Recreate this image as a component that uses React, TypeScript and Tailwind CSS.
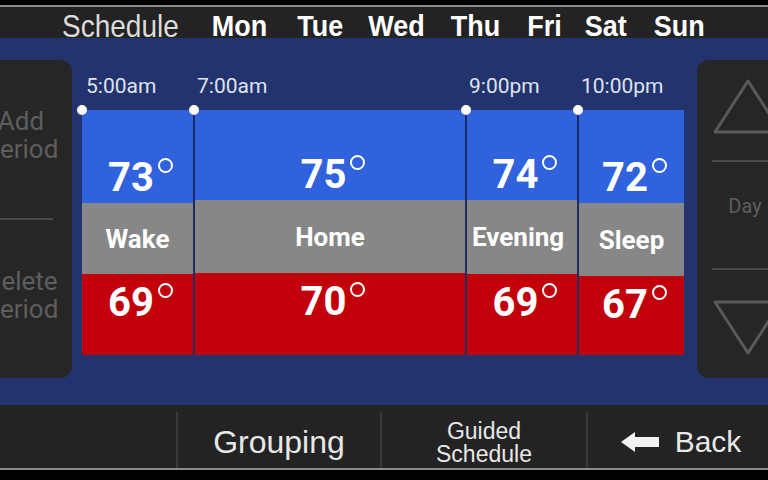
const days = [
  { name: "Mon", cls: "ml-[33px]" },
  { name: "Tue", cls: "ml-[30px]" },
  { name: "Wed", cls: "ml-[25px]" },
  { name: "Thu", cls: "ml-[26px]" },
  { name: "Fri", cls: "ml-[27px]" },
  { name: "Sat", cls: "ml-[23px]" },
  { name: "Sun", cls: "ml-[27px]" },
];

const periods = [
  { time: "5:00am", label: "Wake", cool: 73, heat: 69, w: "w-[111px]", blue: "h-[93px]", gray: "h-[71px]", first: true },
  { time: "7:00am", label: "Home", cool: 75, heat: 70, w: "w-[272px]", blue: "h-[90px]", gray: "h-[73px]", first: false },
  { time: "9:00pm", label: "Evening", cool: 74, heat: 69, w: "w-[112px]", blue: "h-[90px]", gray: "h-[74px]", first: false },
  { time: "10:00pm", label: "Sleep", cool: 72, heat: 67, w: "w-[107px]", blue: "h-[93px]", gray: "h-[73px]", first: false },
];

function Temp({ value }: { value: number }) {
  return (
    <div className="flex items-start justify-center pl-[6px]">
      <span className="text-[40px] font-bold leading-none text-white">{value}</span>
      <span className="ml-[4px] h-[15px] w-[15px] rounded-full border-2 border-white" />
    </div>
  );
}

export default function App() {
  return (
    <div className="flex h-[480px] w-[768px] flex-col overflow-hidden bg-black font-['Liberation_Sans',Arial,sans-serif]">
      <div className="h-[5px] shrink-0 bg-black" />
      <div className="h-[2px] shrink-0 bg-[#8c8c8c]" />

      {/* day header */}
      <div className="flex h-[31px] shrink-0 items-start bg-[#232323] pl-[62px] pt-[5px] text-white">
        <span className="origin-top scale-y-110 text-[28px] leading-none text-[#dcdcdc]">Schedule</span>
        {days.map((d) => (
          <span key={d.name} className={`${d.cls} origin-top scale-y-110 text-[27px] font-bold leading-none`}>
            {d.name}
          </span>
        ))}
      </div>

      {/* schedule body */}
      <div className="flex h-[367px] shrink-0 items-start overflow-hidden bg-[#22336e] pt-[22px] font-['Roboto',sans-serif]">
        <div className="-ml-[30px] flex h-[318px] w-[102px] shrink-0 flex-col rounded-xl bg-[#262626] text-[26px] leading-[28px] text-[#5e5e5e]">
          <div className="flex flex-1 flex-col items-center justify-center pb-[7px]">
            <span>Add</span>
            <span>Period</span>
          </div>
          <div className="mx-[19px] h-[2px] bg-[#4a4a4a]" />
          <div className="flex flex-1 flex-col items-center justify-center pb-[8px]">
            <span>Delete</span>
            <span>Period</span>
          </div>
        </div>

        <div className="ml-[10px] flex w-[602px] shrink-0">
          {periods.map((p) => (
            <div key={p.time} className={`${p.w} flex shrink-0 flex-col`}>
              <div className="h-[50px] pl-[4px] pt-[16px] text-[21px] leading-none text-[#dfe3ee]">{p.time}</div>
              <div className={`relative flex h-[245px] flex-col ${p.first ? "" : "border-l-2 border-[#1d2d63]"}`}>
                <span className={`absolute top-[-5px] h-[10px] w-[10px] rounded-full bg-white ${p.first ? "left-[-5px]" : "left-[-6px]"}`} />
                <div className={`${p.blue} flex items-end justify-center bg-[#2f62dc] pb-[5px]`}>
                  <Temp value={p.cool} />
                </div>
                <div className={`${p.gray} flex items-center overflow-hidden bg-[#878787] text-[26px] font-bold leading-none text-white ${p.label === "Evening" ? "justify-start pl-[5px]" : "justify-center"}`}>
                  <span className="whitespace-nowrap">{p.label}</span>
                </div>
                <div className="flex flex-1 items-start justify-center bg-[#c2000c] pt-[9px]">
                  <Temp value={p.heat} />
                </div>
              </div>
            </div>
          ))}
        </div>

        <div className="ml-[13px] flex h-[318px] w-[102px] shrink-0 flex-col rounded-xl bg-[#262626]">
          <div className="flex h-[100px] items-start justify-center pt-[18px]">
            <svg width="72" height="58" viewBox="0 0 72 58" fill="none">
              <path d="M36 3 L69 54 L3 54 Z" stroke="#5a5a5a" strokeWidth="3" strokeLinejoin="round" />
            </svg>
          </div>
          <div className="mx-[15px] h-[2px] bg-[#4a4a4a]" />
          <div className="flex h-[106px] items-center justify-center pb-[18px] pr-[6px] text-[20px] text-[#5e5e5e]">Day</div>
          <div className="mx-[15px] h-[2px] bg-[#4a4a4a]" />
          <div className="flex flex-1 items-start justify-center pt-[28px]">
            <svg width="72" height="58" viewBox="0 0 72 58" fill="none">
              <path d="M3 4 L69 4 L36 55 Z" stroke="#5a5a5a" strokeWidth="3" strokeLinejoin="round" />
            </svg>
          </div>
        </div>
      </div>

      {/* bottom bar */}
      <div className="flex h-[63px] shrink-0 bg-[#232323] text-[#e8e8e8]">
        <div className="w-[176px] shrink-0" />
        <div className="mt-[7px] h-[56px] w-[2px] shrink-0 bg-[#3a3a3a]" />
        <div className="flex w-[202px] shrink-0 items-center justify-center pt-[10px] text-[32px] leading-none">Grouping</div>
        <div className="mt-[7px] h-[56px] w-[2px] shrink-0 bg-[#3a3a3a]" />
        <div className="flex w-[204px] shrink-0 flex-col items-center justify-center pt-[12px] text-[23px] leading-[23px]">
          <span>Guided</span>
          <span>Schedule</span>
        </div>
        <div className="mt-[7px] h-[56px] w-[2px] shrink-0 bg-[#3a3a3a]" />
        <div className="flex flex-1 items-center justify-center gap-[16px] pt-[10px] pl-[6px]">
          <svg width="38" height="20" viewBox="0 0 38 20">
            <path d="M0 10 L14 0 L14 5 L38 5 L38 15 L14 15 L14 20 Z" fill="#f2f2f2" />
          </svg>
          <span className="text-[30px] leading-none">Back</span>
        </div>
      </div>
      <div className="h-[2px] shrink-0 bg-[#8c8c8c]" />
      <div className="flex-1 bg-black" />
    </div>
  );
}
